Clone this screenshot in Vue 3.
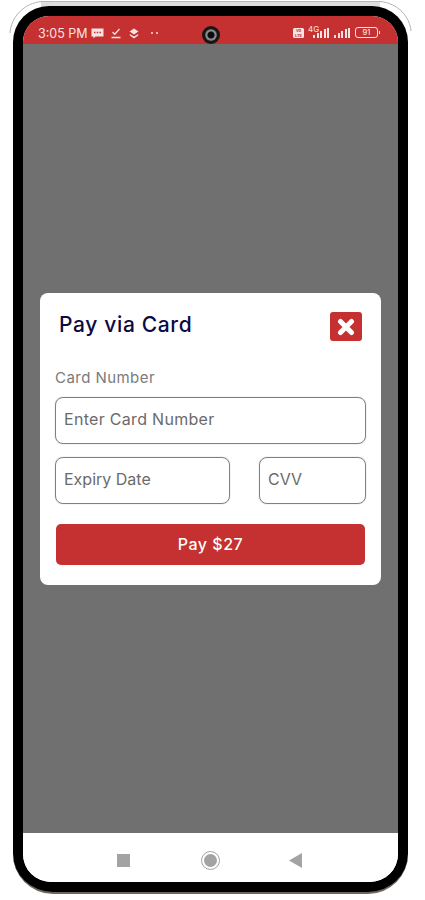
<script setup>
const bars = [3, 5, 7, 9, 10]
</script>

<template>
  <div class="page">
    <svg class="rim" width="425" height="40" viewBox="0 0 425 40">
      <path d="M41 2H380V7H41z" fill="#dcdcda"/>
      <path d="M10 33C11 17 24 3 42 1.500H380C398 3 410 17 411 31" fill="none" stroke="#b4b4b1" stroke-width="1"/>
    </svg>
    <div class="phone">
      <div class="screen">
        <header class="status">
          <div class="status-left">
            <span class="time">3:05 PM</span>
            <svg class="chat" width="13" height="11" viewBox="0 0 13 11"><path d="M0.500 0.500h12v8H4.500l-2 2v-2h-2z" fill="#f6e3e3"/><path d="M3 4.500h1.500M5.700 4.500h1.500M8.400 4.500h1.500" stroke="#c53030" stroke-width="1.500"/></svg>
            <svg class="check" width="10" height="11" viewBox="0 0 10 11"><path d="M1.500 4l2.200 2.200L8.500 1" fill="none" stroke="#f6e3e3" stroke-width="1.300"/><path d="M0.500 9.500h9" stroke="#f6e3e3" stroke-width="1.500"/></svg>
            <svg class="layers" width="10" height="11" viewBox="0 0 10 11"><path d="M5 0.500l4.500 3-4.500 3-4.500-3zM0.800 6l4.200 2.500L9.200 6v1.500L5 10.500 0.800 7.500z" fill="#f6e3e3"/></svg>
            <span class="dots"><i></i><i></i></span>
          </div>
          <div class="camera"><span></span></div>
          <div class="status-right">
            <span class="volte">Vo<br>LTE</span>
            <span class="net">
              <span class="four">4G</span>
              <span class="bars inner"><i v-for="b in bars" :key="b" :style="{ height: b + 'px' }"></i></span>
            </span>
            <span class="bars second"><i v-for="b in bars" :key="b" :style="{ height: b + 'px' }"></i></span>
            <span class="battery"><b>91</b></span>
          </div>
        </header>

        <main class="overlay">
          <section class="modal">
            <div class="modal-head">
              <h1>Pay via Card</h1>
              <button class="close" aria-label="Close">
                <svg width="18" height="18" viewBox="0 0 18 18"><path d="M3.500 3.500l11 11M14.500 3.500l-11 11" stroke="#fff" stroke-width="5" stroke-linecap="round"/></svg>
              </button>
            </div>
            <label class="label">Card Number</label>
            <div class="field full">Enter Card Number</div>
            <div class="row">
              <div class="field expiry">Expiry Date</div>
              <div class="field cvv">CVV</div>
            </div>
            <button class="pay"><span>Pay $27</span></button>
          </section>
        </main>

        <nav class="nav">
          <span class="square"></span>
          <span class="circle"><span></span></span>
          <svg width="13" height="15" viewBox="0 0 13 15"><path d="M13 0v15L0 7.500z" fill="#a3a3a3"/></svg>
        </nav>
      </div>
    </div>
  </div>
</template>

<style>
html, body { margin: 0; background: #fff; }
</style>

<style scoped>
.page {
  position: relative;
  width: 425px;
  height: 900px;
  box-sizing: border-box;
  padding: 6px 17px 0 13px;
  background: #fff;
  font-family: "Inter", "Liberation Sans", sans-serif;
}
.rim { position: absolute; left: 0; top: 0; }
.phone {
  position: relative;
  width: 395px;
  height: 888px;
  box-sizing: border-box;
  padding: 10px;
  background: #000;
  border-radius: 36px 36px 40px 40px;
  border-bottom: 2px solid #6f675c;
}
.screen {
  height: 100%;
  display: flex;
  flex-direction: column;
  border-radius: 26px 26px 28px 28px;
  overflow: hidden;
  background: #fff;
}
.status {
  height: 28px;
  box-sizing: border-box;
  flex: none;
  background: #c53030;
  display: flex;
  align-items: center;
  padding: 6px 20px 0 15px;
  position: relative;
  color: #f6e3e3;
}
.status-left { display: flex; align-items: center; }
.time { font-size: 12.500px; }
.chat { margin-left: 3px; }
.check { margin-left: 7px; }
.layers { margin-left: 8px; }
.dots { display: flex; gap: 3px; margin-left: 12px; }
.dots i { width: 2px; height: 2px; background: #f6e3e3; border-radius: 50%; }
.camera {
  position: absolute;
  left: 179px;
  top: 10px;
  width: 18px;
  height: 18px;
  border-radius: 50%;
  background: #161616;
  display: flex;
  align-items: center;
  justify-content: center;
}
.camera span {
  width: 12px;
  height: 12px;
  border-radius: 50%;
  background: radial-gradient(circle at 50% 50%, #0c0c0c 0 3px, #8a8a8a 4px 5px, #555 6px);
}
.status-right {
  margin-left: auto;
  display: flex;
  align-items: flex-end;
  height: 12px;
}
.volte {
  width: 11px;
  height: 10px;
  background: #f6e3e3;
  color: #c53030;
  font-size: 4px;
  line-height: 5px;
  text-align: center;
  font-weight: 700;
  border-radius: 1.500px;
  margin-right: 4px;
  margin-bottom: 1px;
}
.net {
  position: relative;
  display: block;
  width: 21px;
  height: 11px;
  margin-bottom: 1px;
}
.inner { position: absolute; left: 5px; bottom: 0; }
.four { position: absolute; left: 0; top: -2px; font-size: 8px; line-height: 8px; }
.bars { display: flex; align-items: flex-end; gap: 1.500px; }
.bars i { width: 2px; background: #f6e3e3; }
.second { margin-left: 5px; margin-bottom: 1px; }
.battery {
  width: 21px;
  height: 9px;
  border: 1px solid #f6e3e3;
  border-radius: 3px;
  margin-left: 5px;
  margin-bottom: 1px;
  display: flex;
  align-items: center;
  justify-content: center;
  position: relative;
}
.battery b { font-size: 7.500px; font-weight: 500; line-height: 9px; }
.battery::after {
  content: "";
  position: absolute;
  right: -3px;
  top: 3px;
  width: 1.500px;
  height: 3px;
  background: #f6e3e3;
}
.overlay {
  flex: 1;
  background: #707070;
  display: flex;
  align-items: center;
  padding: 1px 17px 0;
}
.modal {
  width: 341px;
  height: 292px;
  box-sizing: border-box;
  padding: 19px 15px 0;
  background: #fff;
  border-radius: 8px;
  display: flex;
  flex-direction: column;
}
.modal-head {
  display: flex;
  justify-content: space-between;
  align-items: flex-start;
  padding: 0 4px;
  height: 29px;
}
h1 {
  margin: 1px 0 0;
  font-size: 21px;
  line-height: 24px;
  font-weight: 500;
  color: #0b0b45;
  letter-spacing: 0.65px;
}
.close {
  width: 32px;
  height: 29px;
  border: 0;
  border-radius: 3px;
  background: #c53030;
  padding: 0;
  display: flex;
  align-items: center;
  justify-content: center;
}
.label {
  margin-top: 27px;
  font-size: 15px;
  line-height: 20px;
  color: #7a7a7a;
  letter-spacing: 0.45px;
}
.field {
  box-sizing: border-box;
  height: 47px;
  border: 1px solid #808080;
  border-radius: 8px;
  box-shadow: 0 0 1px #999;
  padding: 10px 8px 0;
  font-size: 16px;
  line-height: 22px;
  color: #6b6b6b;
}
.full { width: 311px; margin-top: 9px; letter-spacing: 0.3px; }
.row { display: flex; justify-content: space-between; width: 311px; margin-top: 13px; }
.expiry { width: 175px; }
.cvv { width: 107px; }
.pay {
  margin-top: 20px;
  margin-left: 1px;
  width: 309px;
  height: 41px;
  border: 0;
  border-radius: 5px;
  background: #c53030;
  color: #fff;
  padding: 0 0 2px;
  font-family: inherit;
  font-size: 16px;
  font-weight: 500;
  letter-spacing: 0.5px;
}
.nav {
  flex: none;
  height: 49px;
  background: #fff;
  display: flex;
  align-items: center;
  justify-content: space-between;
  padding: 5px 96px 0 94px;
  box-sizing: border-box;
}
.square { width: 13px; height: 13px; background: #a3a3a3; }
.circle {
  width: 19px;
  height: 19px;
  margin-left: 2px;
  box-sizing: border-box;
  border: 1.500px solid #a3a3a3;
  border-radius: 50%;
  display: flex;
  align-items: center;
  justify-content: center;
}
.circle span { width: 13px; height: 13px; background: #a3a3a3; border-radius: 50%; }
</style>
